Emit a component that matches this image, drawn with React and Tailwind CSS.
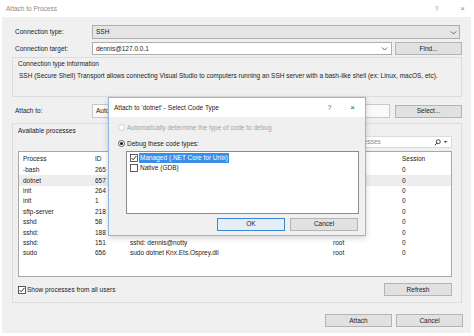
import React from "react";

const font = { fontFamily: '"Liberation Sans", Arial, sans-serif' };

function Chevron() {
  return (
    <svg width="7" height="5" viewBox="0 0 7 5" className="shrink-0">
      <path d="M1 1.5 L3.5 4 L6 1.5" fill="none" stroke="#555" strokeWidth="0.9" />
    </svg>
  );
}

function Check({ checked, size = 8 }) {
  return (
    <svg width={size} height={size} viewBox="0 0 8 8" className="shrink-0">
      <rect x="0.5" y="0.5" width="7" height="7" fill="#fff" stroke="#333" strokeWidth="0.8" />
      {checked && <path d="M1.6 4.1 L3.2 5.8 L6.4 1.9" fill="none" stroke="#222" strokeWidth="0.9" />}
    </svg>
  );
}

function Radio({ checked, disabled }) {
  return (
    <svg width="7" height="7" viewBox="0 0 7 7" className="shrink-0">
      <circle cx="3.5" cy="3.5" r="3" fill="#fff" stroke={disabled ? "#c4c4c4" : "#333"} strokeWidth="0.8" />
      {checked && <circle cx="3.5" cy="3.5" r="1.6" fill="#222" />}
    </svg>
  );
}

function Btn({ children, w = "w-[67px]", def }) {
  return (
    <div
      className={`${w} h-[13px] flex items-center justify-center text-[6.5px] text-[#1b1b1b] ${
        def ? "bg-[#e5eef8] border border-[#3b86d1]" : "bg-[#e1e1e1] border border-[#b4b4b4]"
      }`}
    >
      {children}
    </div>
  );
}

// titles of the rows hidden behind the dialog are left blank
const rows = [
  ["-bash", "265", "", ""],
  ["dotnet", "657", "", ""],
  ["init", "264", "", ""],
  ["init", "1", "", ""],
  ["sftp-server", "218", "", ""],
  ["sshd", "58", "", ""],
  ["sshd:", "188", "", ""],
  ["sshd:", "151", "sshd: dennis@notty", "root"],
  ["sudo", "656", "sudo dotnet Knx.Ets.Osprey.dll", "root"],
];

export default function App() {
  return (
    <div className="w-[474px] h-[336px] bg-white relative overflow-hidden text-[#1b1b1b]" style={font}>
      <div className="ml-[2px] w-[469px] flex flex-col">
        {/* title bar */}
        <div className="h-[17px] bg-white flex items-center pl-[4px] pr-[6px] text-[6.5px]">
          <span className="text-[#8a8a8a]">Attach to Process</span>
          <span className="ml-auto text-[#8a8a8a] mr-[22px]">?</span>
          <span className="text-[#8a8a8a] text-[8px]">×</span>
        </div>

        {/* body */}
        <div className="h-[316px] bg-[#f0f0f0] flex flex-col text-[6.5px]">
          <div className="flex items-center mt-[8px] h-[14px]">
            <span className="w-[90px] pl-[13px]">Connection type:</span>
            <div className="w-[368px] h-[14px] bg-[#e5e5e5] border border-[#adadad] flex items-center pl-[3px] pr-[2px]">
              <span>SSH</span>
              <span className="ml-auto"><Chevron /></span>
            </div>
          </div>

          <div className="flex items-center mt-[3px] h-[13px]">
            <span className="w-[90px] pl-[13px]">Connection target:</span>
            <div className="w-[300px] h-[13px] bg-white border border-[#adadad] flex items-center pl-[3px] pr-[3px]">
              <span>dennis@127.0.0.1</span>
              <span className="ml-auto"><Chevron /></span>
            </div>
            <div className="ml-[3px]">
              <Btn>Find...</Btn>
            </div>
          </div>

          <div className="ml-[10px] mt-[2px] w-[450px] h-[40px] border border-[#dcdcdc] pl-[5px] pt-[1px] flex flex-col">
            <span>Connection type information</span>
            <span className="pl-[1px] mt-[2px]">
              SSH (Secure Shell) Transport allows connecting Visual Studio to computers running an SSH server with a bash-like shell (ex: Linux, macOS, etc).
            </span>
          </div>

          <div className="flex items-center mt-[7px] h-[14px]">
            <span className="w-[90px] pl-[13px]">Attach to:</span>
            <div className="w-[298px] h-[14px] bg-[#fafafa] border border-[#c8c8c8] flex items-center pl-[3px]">
              <span>Auto</span>
            </div>
            <div className="ml-[5px]">
              <Btn>Select...</Btn>
            </div>
          </div>

          {/* available processes */}
          <div className="ml-[10px] mt-[5px] w-[450px] h-[180px] border border-[#dcdcdc] flex flex-col">
            <div className="flex items-start h-[27px]">
              <span className="pl-[5px] pt-[2px]">Available processes</span>
              <div className="ml-auto mr-[9px] mt-[12px] w-[122px] h-[12px] bg-white border border-[#dcdcdc] flex items-center pl-[4px] pr-[3px] text-[#8a8a8a]">
                <span>Filter processes</span>
                <svg width="7" height="7" viewBox="0 0 7 7" className="ml-auto">
                  <circle cx="4.3" cy="2.7" r="2" fill="none" stroke="#333" strokeWidth="0.9" />
                  <path d="M2.9 4.1 L0.8 6.2" stroke="#333" strokeWidth="1" />
                </svg>
                <svg width="5" height="4" viewBox="0 0 5 4" className="ml-[2px]">
                  <path d="M1 1 L2.5 2.8 L4 1" fill="#444" stroke="#444" strokeWidth="0.5" />
                </svg>
              </div>
            </div>

            <div className="ml-[5px] w-[434px] h-[126px] bg-white border border-[#a8a8a8] flex flex-col">
              <div className="grid grid-cols-[72px_35px_203px_69px_1fr] h-[13px] items-center pl-[4px]">
                <span>Process</span>
                <span>ID</span>
                <span></span>
                <span></span>
                <span>Session</span>
              </div>
              {rows.map((r, i) => (
                <div
                  key={i}
                  className={`grid grid-cols-[72px_35px_203px_69px_1fr] h-[10.4px] items-center pl-[4px] ${
                    i === 1 ? "bg-[#ededed]" : ""
                  }`}
                >
                  <span>{r[0]}</span>
                  <span>{r[1]}</span>
                  <span>{r[2]}</span>
                  <span>{r[3]}</span>
                  <span>0</span>
                </div>
              ))}
            </div>

            <div className="flex items-center mt-[6px] pl-[5px] pr-[9px]">
              <Check checked />
              <span className="ml-[1px]">Show processes from all users</span>
              <div className="ml-auto">
                <Btn w="w-[68px]">Refresh</Btn>
              </div>
            </div>
          </div>

          <div className="flex justify-end mt-[11px] pr-[8px] gap-[4px]">
            <Btn>Attach</Btn>
            <Btn>Cancel</Btn>
          </div>
        </div>
      </div>

      {/* modal dialog */}
      <div className="absolute left-[108px] top-[97px] w-[258px] h-[139px] border border-[#8bb8e6] bg-[#f0f0f0] flex flex-col text-[6.5px] shadow-[0_2px_6px_rgba(0,0,0,0.18)]">
        <div className="h-[19px] bg-white flex items-center pl-[5px] pr-[10px]">
          <span>Attach to 'dotnet' - Select Code Type</span>
          <span className="ml-auto mr-[19px] text-[#555]">?</span>
          <span className="text-[8px] text-[#444]">×</span>
        </div>
        <div className="flex items-center mt-[6px] pl-[9px] text-[#a3a3a3]">
          <Radio disabled />
          <span className="ml-[2px]">Automatically determine the type of code to debug</span>
        </div>
        <div className="flex items-center mt-[6px] pl-[9px]">
          <Radio checked />
          <span className="ml-[2px]">Debug these code types:</span>
        </div>
        <div className="ml-[17px] mt-[2px] w-[233px] h-[63px] bg-white border border-[#8c8c8c] flex flex-col pt-[1px] pl-[3px]">
          <div className="flex items-center h-[10px]">
            <Check checked />
            <span className="ml-[1px] bg-[#3a8ee6] text-white px-[1px] h-[10px] flex items-center">
              Managed (.NET Core for Unix)
            </span>
          </div>
          <div className="flex items-center h-[10px]">
            <Check />
            <span className="ml-[2px]">Native (GDB)</span>
          </div>
        </div>
        <div className="flex justify-end mt-[4px] pr-[7px] gap-[5px]">
          <Btn w="w-[68px]" def>OK</Btn>
          <Btn w="w-[68px]">Cancel</Btn>
        </div>
      </div>
    </div>
  );
}
